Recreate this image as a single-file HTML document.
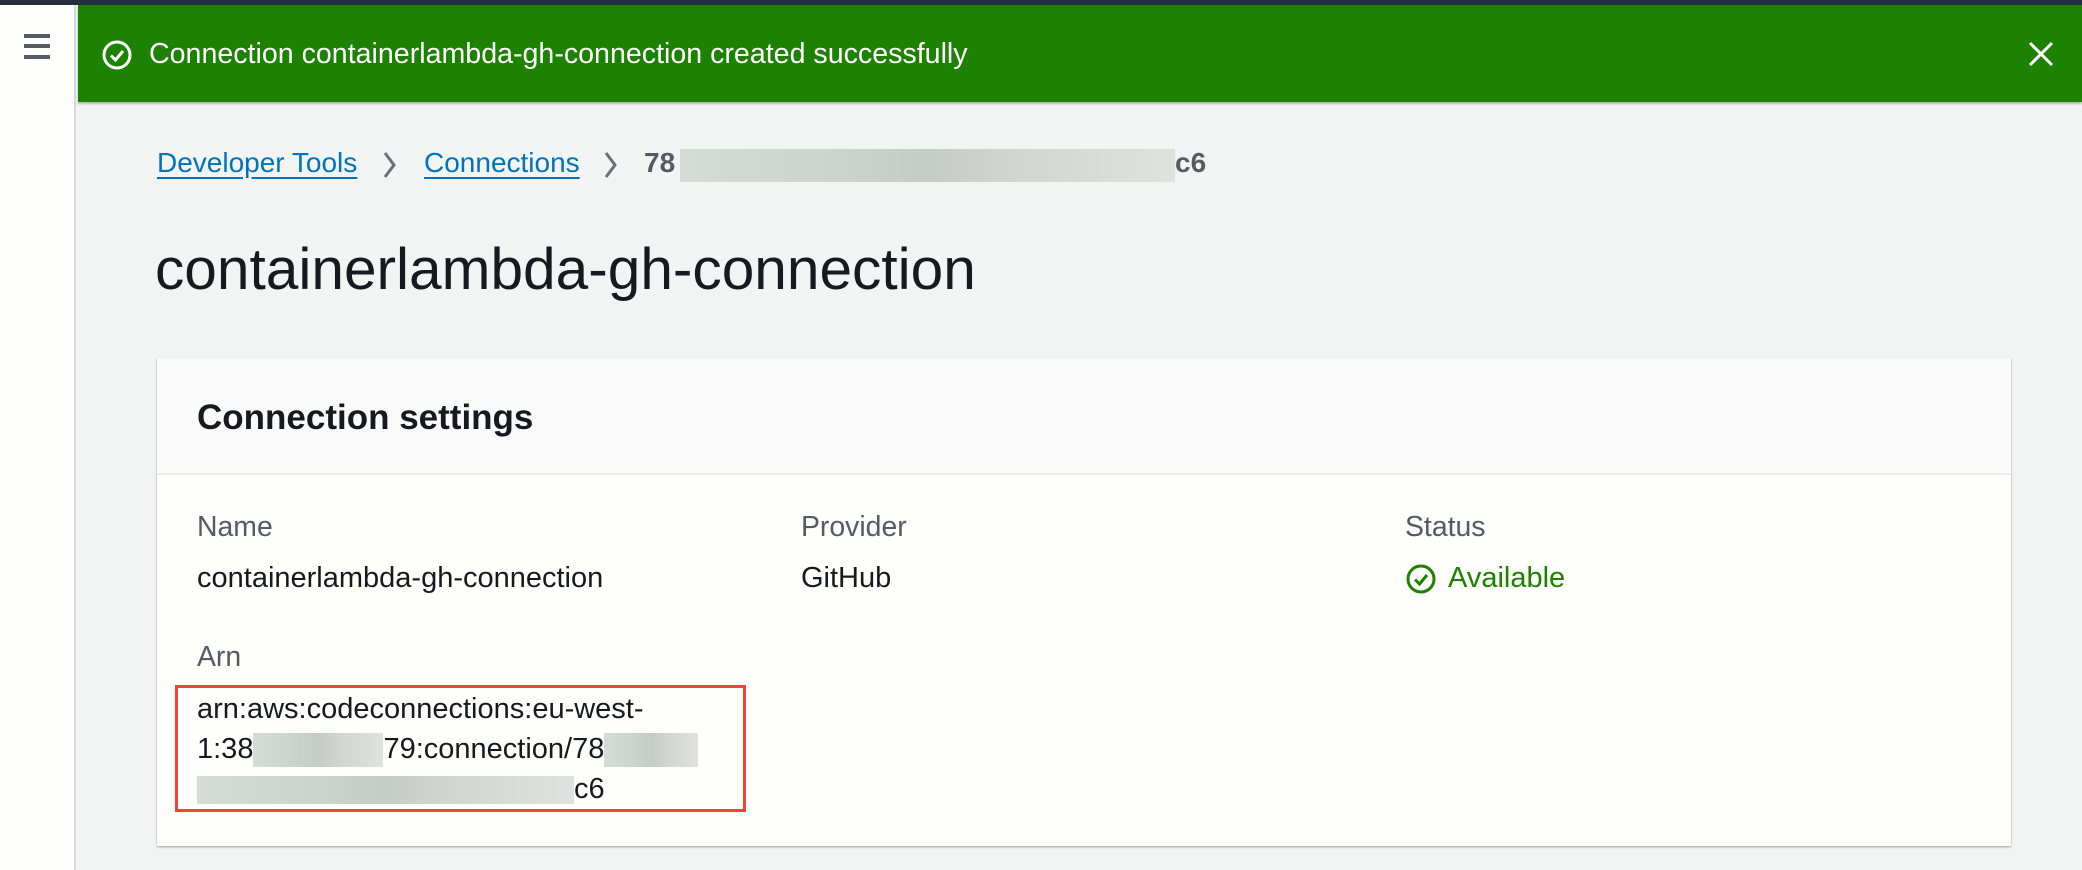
<!DOCTYPE html>
<html><head><meta charset="utf-8"><style>
*{margin:0;padding:0;box-sizing:border-box}
body{width:2082px;height:870px;overflow:hidden;background:#f2f3f3;font-family:"Liberation Sans",Arial,sans-serif;position:relative;color:#16191f}
.abs{position:absolute;white-space:nowrap}
.topbar{left:0;top:0;width:2082px;height:5px;background:#232f3e}
.side{left:0;top:5px;width:76px;height:865px;background:#fdfdfb;border-right:2px solid #d5dbdb}
.ham{left:24px;width:26px;height:4px;background:#545b64}
.banner{left:78px;top:5px;width:2004px;height:97px;background:#1d8102;box-shadow:0 2px 2px rgba(0,0,0,.25)}
.btxt{left:149px;top:38px;font-size:28.6px;color:#fff}
.bc{top:147px;font-size:28px}
.link{color:#0073bb;text-decoration:underline;text-underline-offset:5px}
.blur{background:linear-gradient(90deg,#d5dcd5,#cdd3cd 30%,#c5cbc5 50%,#d2d7d2 70%,#dfe2df)}
.card{left:157px;top:358px;width:1854px;height:488px;background:#fefefb;box-shadow:0 1px 2px rgba(0,0,0,.35)}
.chead{left:157px;top:358px;width:1854px;height:117px;background:#fafafa;border-bottom:2px solid #eaeded}
.lab{font-size:28.4px;color:#545b64}
.val{font-size:29px;color:#16191f}
.ib{display:inline-block;vertical-align:middle}
</style></head><body>
<div class="abs topbar"></div>
<div class="abs side"></div>
<div class="abs ham" style="top:34px"></div>
<div class="abs ham" style="top:44px"></div>
<div class="abs ham" style="top:55px"></div>
<div class="abs banner"></div>
<svg class="abs" style="left:101px;top:39px" width="32" height="32" viewBox="0 0 32 32"><circle cx="16" cy="16" r="13" fill="none" stroke="#fff" stroke-width="3"/><path d="M10 16.5l4.5 4.5L22 12" fill="none" stroke="#fff" stroke-width="3"/></svg>
<div class="abs btxt">Connection containerlambda-gh-connection created successfully</div>
<svg class="abs" style="left:2027px;top:40px" width="28" height="28" viewBox="0 0 28 28"><path d="M3 3L25 25M25 3L3 25" stroke="#fff" stroke-width="3"/></svg>
<div class="abs bc link" style="left:157px">Developer Tools</div>
<svg class="abs" style="left:382px;top:150px" width="16" height="30" viewBox="0 0 16 30"><path d="M3 3l9 12-9 12" fill="none" stroke="#687078" stroke-width="3"/></svg>
<div class="abs bc link" style="left:424px">Connections</div>
<svg class="abs" style="left:603px;top:150px" width="16" height="30" viewBox="0 0 16 30"><path d="M3 3l9 12-9 12" fill="none" stroke="#687078" stroke-width="3"/></svg>
<div class="abs bc" style="left:644px;color:#545b64;font-weight:bold">78</div>
<div class="abs blur" style="left:680px;top:149px;width:495px;height:33px"></div>
<div class="abs bc" style="left:1175px;color:#545b64;font-weight:bold">c6</div>
<div class="abs" style="left:155px;top:236px;font-size:58.6px;color:#16191f">containerlambda-gh-connection</div>
<div class="abs card"></div>
<div class="abs chead"></div>
<div class="abs" style="left:197px;top:398px;font-size:35px;font-weight:bold">Connection settings</div>
<div class="abs lab" style="left:197px;top:511px">Name</div>
<div class="abs lab" style="left:801px;top:511px">Provider</div>
<div class="abs lab" style="left:1405px;top:511px">Status</div>
<div class="abs val" style="left:197px;top:562px">containerlambda-gh-connection</div>
<div class="abs val" style="left:801px;top:562px">GitHub</div>
<svg class="abs" style="left:1405px;top:563px" width="32" height="32" viewBox="0 0 32 32"><circle cx="16" cy="16" r="13" fill="none" stroke="#1d8102" stroke-width="3"/><path d="M10 16.5l4.5 4.5L22 12" fill="none" stroke="#1d8102" stroke-width="3"/></svg>
<div class="abs val" style="left:1448px;top:562px;color:#1d8102">Available</div>
<div class="abs lab" style="left:197px;top:641px">Arn</div>
<div class="abs" style="left:175px;top:685px;width:571px;height:127px;border:3px solid #f44336"></div>
<div class="abs val" style="left:197px;top:689px;line-height:40px">arn:aws:codeconnections:eu-west-<br>1:38<span class="ib blur" style="width:130px;height:34px"></span>79:connection/78<span class="ib blur" style="width:94px;height:34px"></span><br><span class="ib blur" style="width:377px;height:28px"></span>c6</div>
</body></html>
